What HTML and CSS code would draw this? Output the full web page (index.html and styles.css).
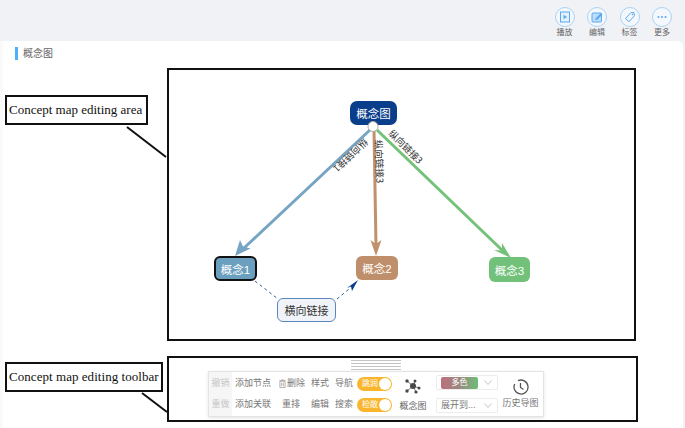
FILE: index.html
```html
<!DOCTYPE html>
<html lang="zh">
<head>
<meta charset="utf-8">
<title>概念图</title>
<link rel="stylesheet" href="styles.css">
</head>
<body>
<div class="app">
  <header class="topbar">
    <div class="tool">
      <span class="tool-icon"><svg viewBox="0 0 20 20" width="20" height="20"><rect x="5.500" y="5" width="9" height="10" fill="#e3f1fe" stroke="#5aa9f0"/><path d="M8.500 7.800v4.400l3.600-2.200z" fill="#5aa9f0"/></svg></span>
      <span class="tool-label">播放</span>
    </div>
    <div class="tool">
      <span class="tool-icon"><svg viewBox="0 0 20 20" width="20" height="20"><rect x="5" y="6" width="9.500" height="9" rx="1" fill="#bcdcfa" stroke="#5aa9f0"/><path d="M8.500 11.500l5.500-5.500 1.500 1.500-5.500 5.500h-1.500z" fill="#5aa9f0"/></svg></span>
      <span class="tool-label">编辑</span>
    </div>
    <div class="tool">
      <span class="tool-icon"><svg viewBox="0 0 20 20" width="20" height="20"><path d="M5.500 11.500l5.500-6 3 .2.500 3-5.500 6z" fill="none" stroke="#5aa9f0" stroke-linejoin="round"/><circle cx="12.500" cy="7.500" r=".8" fill="#5aa9f0"/></svg></span>
      <span class="tool-label">标签</span>
    </div>
    <div class="tool">
      <span class="tool-icon"><svg viewBox="0 0 20 20" width="20" height="20"><g fill="#5aa9f0"><circle cx="6.500" cy="10" r="1"/><circle cx="10" cy="10" r="1"/><circle cx="13.500" cy="10" r="1"/></g></svg></span>
      <span class="tool-label">更多</span>
    </div>
  </header>

  <main class="card">
    <h1 class="title">概念图</h1>
  </main>

  <div class="frame frame-area"></div>
  <div class="frame frame-bar"></div>
  <div class="callout callout-area">Concept map editing area</div>
  <div class="callout callout-bar">Concept map editing toolbar</div>

  <div class="node node-root">概念图</div>
  <div class="node node-1">概念1</div>
  <div class="node node-2">概念2</div>
  <div class="node node-3">概念3</div>
  <div class="node node-link">横向链接</div>

  <svg class="edges" width="685" height="428" viewBox="0 0 685 428">
    <line class="pointer" x1="127" y1="127" x2="166" y2="157"/>
    <line class="pointer" x1="142" y1="393" x2="167" y2="412"/>

    <line x1="371" y1="129" x2="243" y2="249" stroke="#76a5c4" stroke-width="3"/>
    <path d="M235 256l5-16 3 6.500 7.500 2z" fill="#76a5c4"/>
    <line x1="374" y1="130" x2="376" y2="246" stroke="#c0916c" stroke-width="3"/>
    <path d="M376 256l-5.500-16 5.500 4 5.500-4z" fill="#c0916c"/>
    <line x1="377" y1="130" x2="503" y2="251" stroke="#74c17a" stroke-width="3"/>
    <path d="M511 258l-17-8 8 .5 0-7.500z" fill="#74c17a"/>

    <line class="dash" x1="255" y1="281" x2="278" y2="299"/>
    <line class="dash" x1="337" y1="299" x2="349" y2="289"/>
    <path d="M358 280l-11 8 4-1.500 1 4.500z" fill="#0a3d8a"/>

    <circle cx="373" cy="126.500" r="5" fill="#fff" stroke="#a9a9a9"/>

    <text class="edge-text" transform="translate(364 138) rotate(137)">纵向链接1</text>
    <text class="edge-text" transform="translate(375 140) rotate(88)">纵向链接3</text>
    <text class="edge-text" transform="translate(388 134) rotate(45)">纵向链接3</text>
  </svg>

  <div class="grip"><i></i><i></i><i></i><i></i></div>

  <section class="toolbar">
    <div class="undo">
      <span>撤销</span>
      <span>重做</span>
    </div>
    <div class="actions">
      <span>添加节点</span>
      <span class="del"><svg viewBox="0 0 8 10" width="7" height="9"><path d="M1 2.500h6v7h-6zM.5 1.500h7M3 .5h2M3 4v4M5 4v4" fill="none" stroke="#a8a8a8"/></svg>删除</span>
      <span>样式</span>
      <span>导航</span>
      <span class="toggle"><b>跳润</b><i></i></span>
      <span>添加关联</span>
      <span class="mid">重排</span>
      <span>编辑</span>
      <span>搜索</span>
      <span class="toggle"><b>检敞</b><i></i></span>
    </div>
    <div class="type">
      <svg viewBox="0 0 20 20" width="20" height="20"><g stroke="#555" stroke-width=".8"><path d="M10 10L4 5M10 10L12 5M10 10L16 12M10 10L13 16M10 10L4 15"/></g><g fill="#484848"><circle cx="10" cy="10" r="3"/><circle cx="4" cy="5" r="1.700"/><circle cx="12" cy="5" r="1.500"/><circle cx="16" cy="12" r="1.500"/><circle cx="13" cy="16" r="1.600"/><circle cx="4" cy="15" r="1.700"/></g></svg>
      <span>概念图</span>
    </div>
    <div class="selects">
      <div class="select"><span class="swatch">多色</span><svg class="chev" viewBox="0 0 8 5" width="8" height="5"><path d="M.5 .5l3.500 4 3.500-4" fill="none" stroke="#c4c4c4"/></svg></div>
      <div class="select"><span class="sel-text">展开到...</span><svg class="chev" viewBox="0 0 8 5" width="8" height="5"><path d="M.5 .5l3.500 4 3.500-4" fill="none" stroke="#c4c4c4"/></svg></div>
    </div>
    <div class="history">
      <svg viewBox="0 0 16 16" width="16" height="16"><path d="M5 1.700A7 7 0 1 1 1.700 5" fill="none" stroke="#555" stroke-width="1.300"/><path d="M7.500 4v4.500l3 2" fill="none" stroke="#555" stroke-width="1.300"/></svg>
      <span>历史导图</span>
    </div>
  </section>
</div>
</body>
</html>
```
FILE: styles.css
```css
* { box-sizing: border-box; }
html, body { margin: 0; padding: 0; background: #fff; }
body { font-family: "Liberation Sans", "Noto Sans CJK SC", sans-serif; }

.app {
  position: relative;
  width: 685px;
  height: 428px;
  overflow: hidden;
  display: flex;
  flex-direction: column;
  background: #f1f2f6;
}

.topbar {
  height: 41px;
  flex: none;
  display: flex;
  justify-content: flex-end;
  gap: 12.500px;
  padding: 7px 13px 0 0;
}
.tool { width: 20px; display: flex; flex-direction: column; align-items: center; }
.tool-icon {
  width: 20px;
  height: 20px;
  border: 1px solid #a9d3f7;
  border-radius: 50%;
  background: #f4f7fb;
  display: flex;
  align-items: center;
  justify-content: center;
}
.tool-icon svg { flex: none; margin: -1px; }
.tool-label { font-size: 8px; line-height: 12px; color: #666; white-space: nowrap; }

.card {
  flex: 1;
  margin: 0 2px 0 0;
  background: #fff;
  border-radius: 0 6px 0 0;
  padding: 6px 0 0 15px;
  box-shadow: inset 3px 0 0 #fafafa;
}
.title {
  margin: 0;
  padding-left: 5px;
  border-left: 3px solid #4fb0fa;
  font-size: 10px;
  font-weight: 400;
  line-height: 13px;
  color: #666;
}

.frame { position: absolute; border: 2px solid #111; }
.frame-area { left: 167px; top: 68px; width: 469px; height: 273px; }
.frame-bar { left: 167px; top: 356px; width: 471px; height: 66px; }

.callout {
  position: absolute;
  left: 5px;
  border: 2px solid #111;
  background: #fff;
  font-family: "Liberation Serif", serif;
  font-size: 13px;
  color: #111;
  white-space: nowrap;
  display: flex;
  align-items: center;
  padding-left: 2px;
}
.callout-area { top: 95px; width: 143px; height: 30px; }
.callout-bar { top: 362px; width: 158px; height: 30px; letter-spacing: .05px; }

.edges { position: absolute; left: 0; top: 0; }
.pointer { stroke: #111; stroke-width: 2; }
.dash { stroke: #2c62a6; stroke-width: 1; stroke-dasharray: 3 3; }
.edge-text { font-size: 9.500px; fill: #333; font-family: "Noto Sans CJK SC", sans-serif; }

.node {
  position: absolute;
  display: flex;
  align-items: center;
  justify-content: center;
  color: #fff;
  font-size: 11.500px;
  border-radius: 6px;
}
.node-root { left: 350px; top: 101px; width: 47px; height: 24px; background: #0a3d8a; border-radius: 7px; }
.node-1 { left: 214px; top: 256px; width: 43px; height: 25px; background: #6b9fbf; border: 2px solid #111; }
.node-2 { left: 356px; top: 256px; width: 42px; height: 24px; background: #bf8f6c; }
.node-3 { left: 489px; top: 257px; width: 41px; height: 25px; background: #72c17a; }
.node-link {
  left: 277px;
  top: 298px;
  width: 59px;
  height: 24px;
  background: #f0f3f8;
  border: 1px solid #5a86bd;
  color: #333;
  font-size: 11px;
}

.grip {
  position: absolute;
  left: 351px;
  top: 360px;
  width: 50px;
  display: flex;
  flex-direction: column;
  gap: 2px;
}
.grip i { display: block; height: 1px; background: #c4c4c4; }

.toolbar {
  position: absolute;
  left: 208px;
  top: 371px;
  width: 336px;
  height: 46px;
  background: #fff;
  border: 1px solid #e4e4e4;
  box-shadow: 0 1px 3px rgba(0, 0, 0, .12);
  display: flex;
  align-items: stretch;
  font-size: 9px;
  line-height: 11px;
  color: #777;
}
.undo {
  flex: none;
  width: 23px;
  background: #f6f6f6;
  display: flex;
  flex-direction: column;
  justify-content: space-around;
  align-items: center;
  color: #c6c6c6;
  padding: 1px 0;
}
.actions {
  flex: none;
  width: 161px;
  display: grid;
  grid-template-columns: 44px 32px 24px 22px auto;
  grid-template-rows: 1fr 1fr;
  align-items: center;
  padding: 1px 0 1px 3px;
}
.actions > span { white-space: nowrap; }
.actions .mid { padding-left: 3px; }
.del { display: flex; align-items: center; gap: 1px; }
.toggle {
  width: 35px;
  height: 14px;
  border-radius: 7px;
  background: #f9b62c;
  position: relative;
  display: block;
  color: #fff;
  font-size: 8px;
  line-height: 14px;
  padding-left: 5px;
}
.toggle b { font-weight: 400; }
.toggle i {
  position: absolute;
  right: 1px;
  top: 1px;
  width: 12px;
  height: 12px;
  border-radius: 50%;
  background: #fff;
}
.type {
  flex: none;
  width: 38px;
  margin: 0 4px 0 1px;
  display: flex;
  flex-direction: column;
  align-items: center;
  justify-content: center;
  gap: 5px;
  color: #666;
}
.selects {
  flex: none;
  width: 62px;
  display: flex;
  flex-direction: column;
  justify-content: center;
  gap: 8px;
}
.select {
  height: 15px;
  border: 1px solid #ececec;
  border-radius: 2px;
  display: flex;
  align-items: center;
  justify-content: space-between;
  padding: 0 5px 0 4px;
}
.swatch {
  width: 37px;
  height: 12px;
  border-radius: 2px;
  background: linear-gradient(90deg, #bd6f7b, #9b8a80, #6dbd79);
  color: #fff;
  font-size: 8px;
  line-height: 12px;
  text-align: center;
}
.sel-text { color: #777; font-size: 9px; white-space: nowrap; }
.chev { flex: none; }
.history {
  flex: 1;
  display: flex;
  flex-direction: column;
  align-items: center;
  justify-content: center;
  gap: 3px;
  color: #777;
  white-space: nowrap;
}
```
